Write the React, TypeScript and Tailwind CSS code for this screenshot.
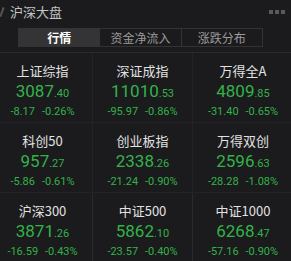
import React from 'react';

const indices = [
  { name: '上证综指', int: '3087', dec: '.40', chg: '-8.17', pct: '-0.26%' },
  { name: '深证成指', int: '11010', dec: '.53', chg: '-95.97', pct: '-0.86%' },
  { name: '万得全A', int: '4809', dec: '.85', chg: '-31.40', pct: '-0.65%' },
  { name: '科创50', int: '957', dec: '.27', chg: '-5.86', pct: '-0.61%' },
  { name: '创业板指', int: '2338', dec: '.26', chg: '-21.24', pct: '-0.90%' },
  { name: '万得双创', int: '2596', dec: '.63', chg: '-28.28', pct: '-1.08%' },
  { name: '沪深300', int: '3871', dec: '.26', chg: '-16.59', pct: '-0.43%' },
  { name: '中证500', int: '5862', dec: '.10', chg: '-23.57', pct: '-0.40%' },
  { name: '中证1000', int: '6268', dec: '.47', chg: '-57.16', pct: '-0.90%' },
];

const tabs = ['行情', '资金净流入', '涨跌分布'];

export default function App() {
  return (
    <div
      className="w-[291px] h-[261px] overflow-hidden bg-[#1b1b1d] text-[#d8d8d8]"
      style={{ fontFamily: '"Noto Sans CJK SC", Roboto, sans-serif' }}
    >
      {/* 标题栏 */}
      <div className="flex items-center justify-between h-[23px] pr-[6px]">
        <div className="flex items-center">
          <span className="w-[2px] h-[10px] bg-[#555] rotate-[20deg] ml-[1px]" />
          <span className="ml-[7px] text-[13px] leading-none text-[#c4c4c4]">沪深大盘</span>
        </div>
        <div className="flex gap-[2px]">
          <span className="w-[4px] h-[4px] bg-[#5a5a5a]" />
          <span className="w-[4px] h-[4px] bg-[#5a5a5a]" />
          <span className="w-[4px] h-[4px] bg-[#5a5a5a]" />
        </div>
      </div>

      {/* Tabs */}
      <div className="flex ml-[18px] mt-[5px] w-[245px] h-[19px] border border-[#333] text-[12px]">
        {tabs.map((t, i) => (
          <div
            key={t}
            className={
              'flex-1 flex items-center justify-center leading-none ' +
              (i === 0 ? 'bg-[#343436] text-white font-bold' : 'text-[#9a9a9a] border-l border-[#333]')
            }
          >
            {t}
          </div>
        ))}
      </div>

      {/* 指数网格 (左侧被裁掉一点) */}
      <div className="grid grid-cols-3 ml-[-7px] w-[300px] mt-[5px] border-t border-[#2a2a2c]">
        {indices.map((d, i) => (
          <div
            key={d.name}
            className={
              'flex flex-col items-center h-[70px] pt-[10px] ' +
              (i % 3 !== 2 ? 'border-r border-[#2a2a2c] ' : '') +
              (i < 6 ? 'border-b border-[#232325]' : '')
            }
          >
            <div className="text-[13px] leading-[16px] text-[#e2e2e2]">{d.name}</div>
            <div className="mt-[2px] leading-[20px] text-[#33b24a]" style={{ fontFamily: 'Roboto, sans-serif' }}>
              <span className="text-[17px]">{d.int}</span>
              <span className="text-[11px]">{d.dec}</span>
            </div>
            <div
              className="mt-[1px] flex gap-[7px] text-[11px] leading-[14px] text-[#33b24a]"
              style={{ fontFamily: 'Roboto, sans-serif' }}
            >
              <span>{d.chg}</span>
              <span>{d.pct}</span>
            </div>
          </div>
        ))}
      </div>
    </div>
  );
}
